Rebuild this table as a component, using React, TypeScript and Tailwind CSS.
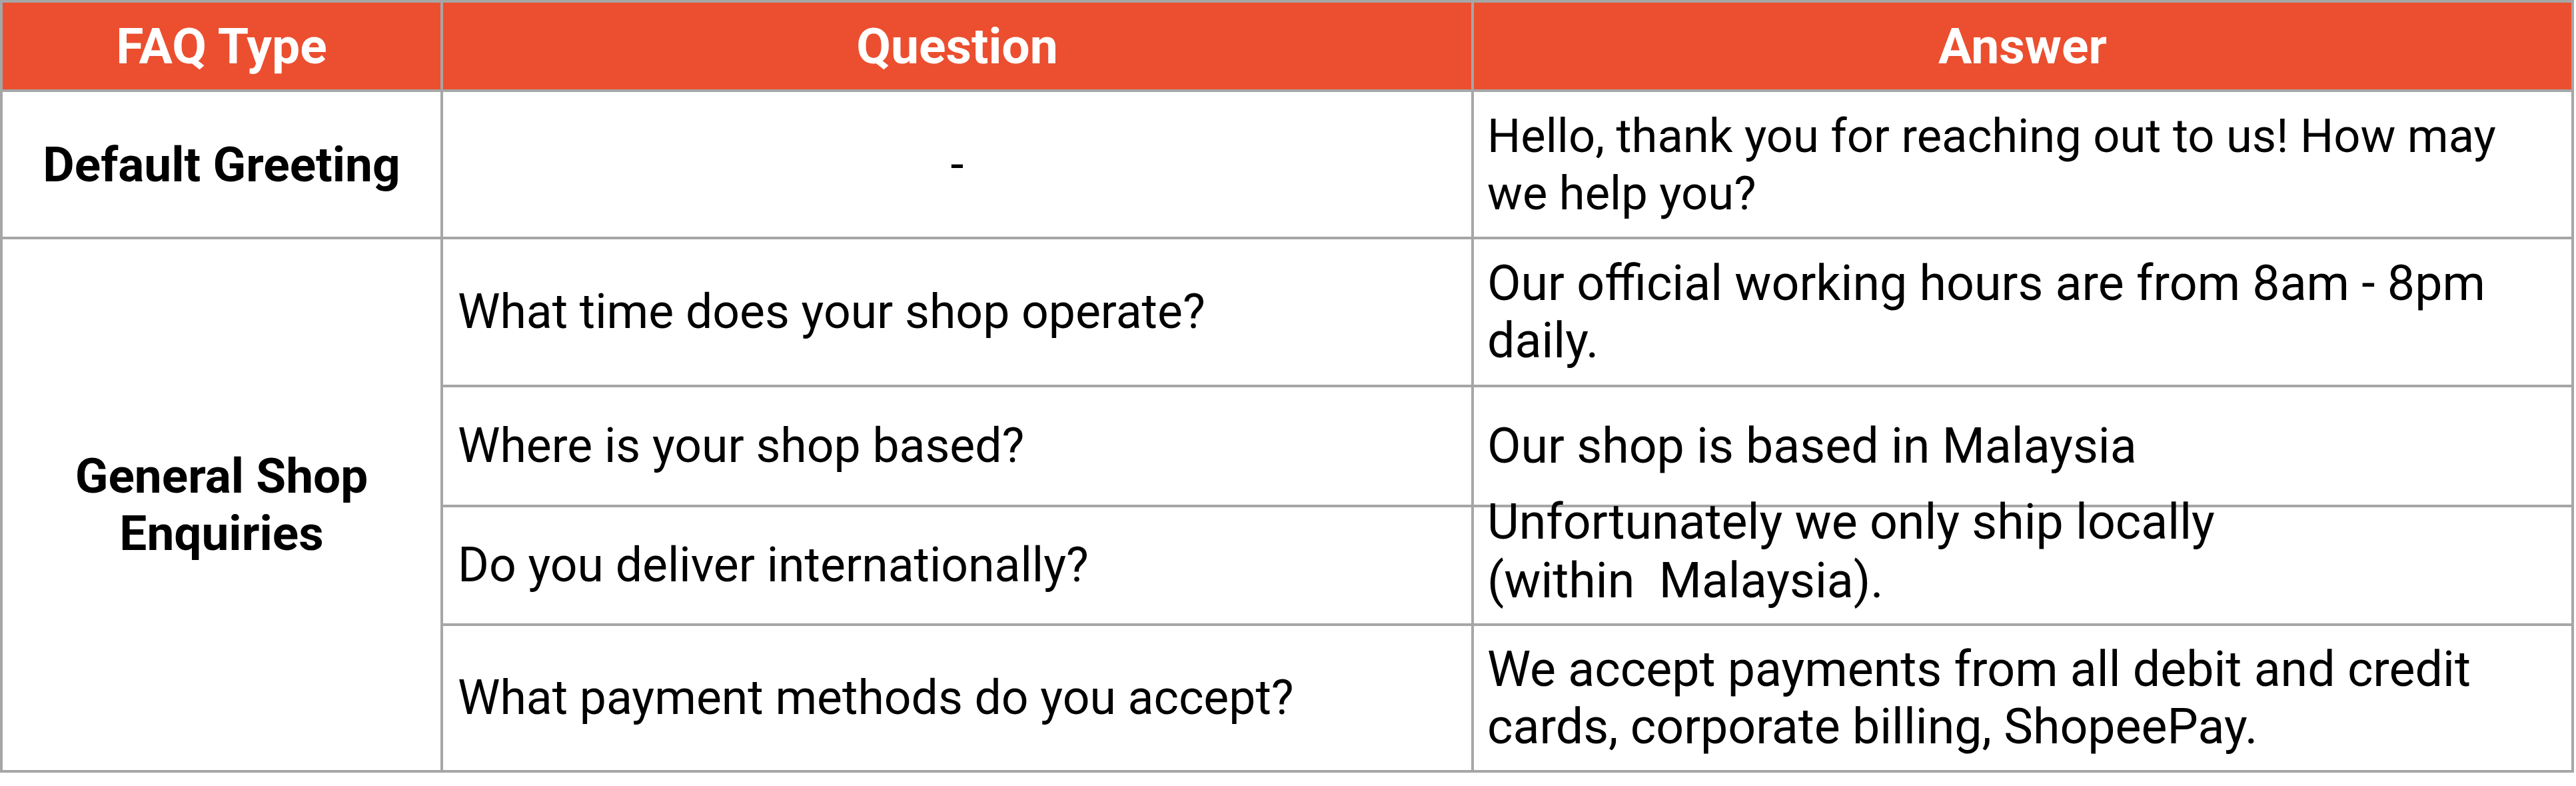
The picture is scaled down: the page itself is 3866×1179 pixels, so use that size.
import * as React from "react";

type Row = {
  question: string;
  answer: React.ReactNode;
  answerClass?: string;
};

const ENQUIRIES: Row[] = [
  {
    question: "What time does your shop operate?",
    answer: (
      <>
        Our official working hours are from 8am - 8pm
        <br />
        daily.
      </>
    ),
  },
  { question: "Where is your shop based?", answer: "Our shop is based in Malaysia" },
  {
    question: "Do you deliver internationally?",
    answer: (
      <>
        Unfortunately we only ship locally
        <br />
        {"(within\u00a0 Malaysia)."}
      </>
    ),
    // text sits a bit high in this cell
    answerClass: "leading-[88px] pb-[42px]",
  },
  {
    question: "What payment methods do you accept?",
    answer: (
      <>
        We accept payments from all debit and credit
        <br />
        cards, corporate billing, ShopeePay.
      </>
    ),
  },
];

const cell = "bg-white flex items-center text-black";

export default function App() {
  return (
    <div className="w-[3866px] h-[1179px] bg-white" style={{ fontFamily: "Roboto, 'Liberation Sans', sans-serif" }}>
      <div className="grid w-[3863px] grid-cols-[657px_1543px_1647px] grid-rows-[130px_217px_218px_176px_174px_216px] gap-[4px] bg-[#a6a6a6] p-[4px]">
        {["FAQ Type", "Question", "Answer"].map((h) => (
          <div key={h} className="bg-[#eb4f2f] flex items-center justify-center text-[75px] font-bold text-white">
            {h}
          </div>
        ))}

        <div className={`${cell} leading-[86px] justify-center text-[73px] font-bold`}>Default Greeting</div>
        <div className={`${cell} leading-[86px] justify-center text-[72px]`}>-</div>
        <div className={`${cell} leading-[86px] pl-[20px] pr-[10px] text-[70.5px]`}>
          <p>
            Hello, thank you for reaching out to us! How may
            <br />
            we help you?
          </p>
        </div>

        <div className={`${cell} leading-[86px] row-span-4 justify-center text-center text-[73px] font-bold`}>
          <p>
            General Shop
            <br />
            Enquiries
          </p>
        </div>
        {ENQUIRIES.map((r) => (
          <React.Fragment key={r.question}>
            <div className={`${cell} leading-[86px] pl-[22px] text-[71.5px]`}>{r.question}</div>
            <div className={`${cell} pl-[20px] pr-[10px] text-[73.5px] ${r.answerClass ?? "leading-[86px]"}`}>
              <p>{r.answer}</p>
            </div>
          </React.Fragment>
        ))}
      </div>
    </div>
  );
}
